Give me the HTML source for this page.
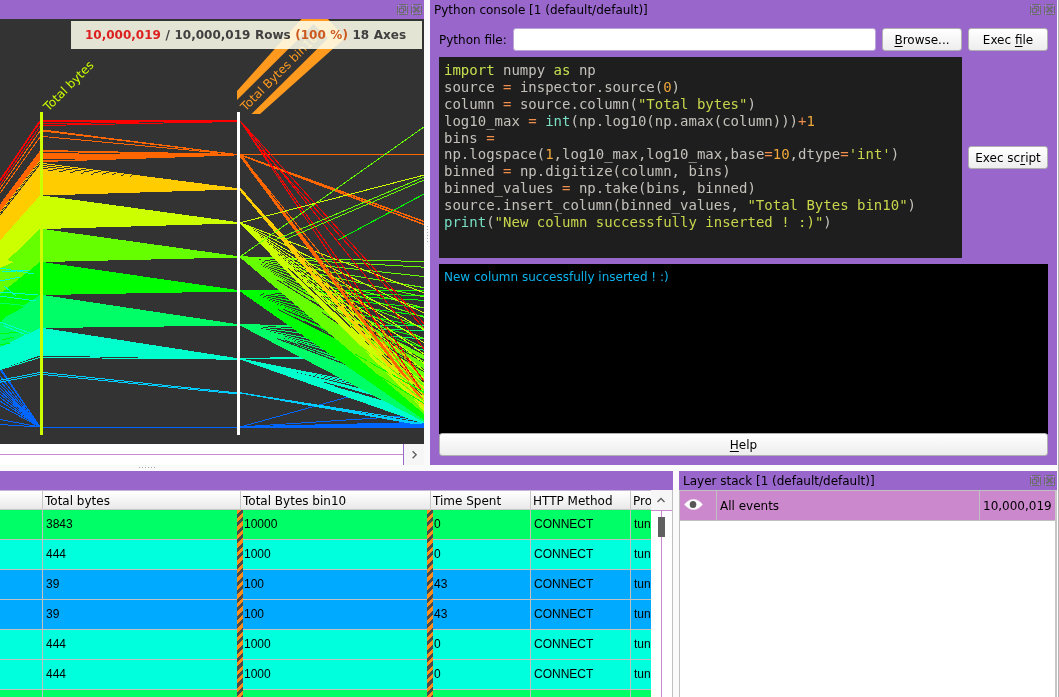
<!DOCTYPE html>
<html lang="en"><head><meta charset="utf-8"><title>Python console</title>
<style>
*{box-sizing:border-box}
html,body{margin:0;padding:0}
body{width:1059px;height:697px;overflow:hidden;background:#fafafa;position:relative;font-family:"DejaVu Sans","Liberation Sans",sans-serif;font-size:12px;color:#000}
.abs{position:absolute}
#plt,#con,#tab,#lay{will-change:transform}
.ttl{line-height:14px;white-space:nowrap}
.btn{position:absolute;border:1px solid #b0b0b0;border-radius:3px;background:linear-gradient(#ffffff,#ededed);text-align:center;white-space:nowrap}
u{text-decoration:underline;text-underline-offset:2px;text-decoration-thickness:1px}

#plt{left:0;top:0;width:424px;height:465px;background:#fff;overflow:hidden}
#plt .bar{left:0;top:0;width:424px;height:19px;background:#9966cc}
#plt svg.pc{left:0;top:19px}
#stats{left:71px;top:21px;width:351px;height:28px;background:rgba(255,255,238,0.87);font-weight:bold;font-size:12px;line-height:28px;white-space:pre;color:#404040;padding-left:14px;word-spacing:0.4px}

#con{left:430px;top:0;width:627px;height:465px;background:#9966cc}
#con .lbl{left:9px;top:33px;line-height:14px}
#con .inp{left:83px;top:28px;width:363px;height:23px;background:#fff;border:1px solid #b9a4d4;border-radius:3px}
#code{left:9px;top:57px;width:523px;height:201px;background:#1e1e1e;color:#c3c1ba;font-family:"DejaVu Sans Mono","Liberation Mono",monospace;font-size:14px;line-height:17px;padding:5px 0 0 5px;white-space:pre;overflow:hidden;margin:0}
#code .up{position:relative;top:-1px}
#code .k{color:#c5e04e}
#code .s{color:#c8d64c}
#code .o{color:#ef8d4a}
#code .n{color:#f0a83a}
#code .b{color:#78dec4}
#out{left:9px;top:264px;width:609px;height:170px;background:#000;color:#0cb4ee;padding:6px 0 0 5px;line-height:14px}

#tab{left:0;top:471px;width:673px;height:226px;background:#fff;overflow:hidden}
#tab .bar{left:0;top:0;width:673px;height:19px;background:#9966cc}
#tab .hd{left:0;top:19px;width:651px;height:20px;background:linear-gradient(#ffffff,#f4f4f4 50%,#e9e9e9);border-bottom:1px solid #c6c6c6;border-top:1px solid #c4b4d6}
#tab .h{top:21px;line-height:18px;white-space:nowrap}
#tab .hs{top:19px;width:1px;height:20px;background:#c8c8c8}
#tab .r{left:0;width:651px;height:30px;border-bottom:1px solid #c0c0c0;font-family:"Liberation Sans",sans-serif}
#tab .r span{position:absolute;top:0;line-height:28px;white-space:nowrap}
#tab .vs{top:39px;width:1px;height:187px;background:#c0c0c0}
#tab .hz{top:39px;width:6px;height:187px;background:repeating-linear-gradient(135deg,#ff8c1a 0,#ff8c1a 3px,#4a4a4a 3px,#4a4a4a 6px)}

#lay{left:679px;top:471px;width:378px;height:226px;background:#fff}
#lay .bar{left:0;top:0;width:378px;height:19px;background:#9966cc}
#lay .row{left:1px;top:19px;width:375px;height:31px;background:#cc88cc;border-top:1px solid #c0c0c0;border-bottom:1px solid #c0c0c0}
#lay .c{top:0;height:29px;line-height:30px}
</style></head>
<body>
<div id="plt" class="abs">
<div class="abs bar"></div>
<svg class="abs ticons" style="left:397px;top:4px" width="25" height="11" viewBox="0 0 25 11"><g shape-rendering="crispEdges"><g transform="translate(0,0)"><path d="M1.5 0.5H9.5M1.5 10.5H9.5M0.5 1.5V9.5M10.5 1.5V9.5" stroke="#6d6d6d" fill="none"/><rect x="0" y="0" width="1" height="1" fill="#6d6d6d" opacity="0.55"/><rect x="10" y="0" width="1" height="1" fill="#6d6d6d" opacity="0.55"/><rect x="0" y="10" width="1" height="1" fill="#6d6d6d" opacity="0.55"/><rect x="10" y="10" width="1" height="1" fill="#6d6d6d" opacity="0.55"/><rect x="1" y="1" width="1" height="1" fill="#b89fd0"/><rect x="9" y="1" width="1" height="1" fill="#b89fd0"/><rect x="1" y="9" width="1" height="1" fill="#b89fd0"/><rect x="9" y="9" width="1" height="1" fill="#b89fd0"/><path d="M2.5 4.5H6.5V8.5H2.5Z M4.5 4V2.5H8.5V6.5H7" stroke="#6d6d6d" fill="none"/></g><g transform="translate(14,0)"><path d="M1.5 0.5H9.5M1.5 10.5H9.5M0.5 1.5V9.5M10.5 1.5V9.5" stroke="#6d6d6d" fill="none"/><rect x="0" y="0" width="1" height="1" fill="#6d6d6d" opacity="0.55"/><rect x="10" y="0" width="1" height="1" fill="#6d6d6d" opacity="0.55"/><rect x="0" y="10" width="1" height="1" fill="#6d6d6d" opacity="0.55"/><rect x="10" y="10" width="1" height="1" fill="#6d6d6d" opacity="0.55"/><rect x="1" y="1" width="1" height="1" fill="#b89fd0"/><rect x="9" y="1" width="1" height="1" fill="#b89fd0"/><rect x="1" y="9" width="1" height="1" fill="#b89fd0"/><rect x="9" y="9" width="1" height="1" fill="#b89fd0"/><path d="M2.6 2.6L8.4 8.4M8.4 2.6L2.6 8.4" stroke="#6d6d6d" stroke-width="2" fill="none" shape-rendering="geometricPrecision"/></g></g></svg>
<svg class="abs pc" width="424" height="425" viewBox="0 19 424 425" shape-rendering="crispEdges">
<rect x="0" y="19" width="424" height="425" fill="#333333"/>
<polygon points="43.0,328.0 237.0,358.1 237.0,359.6 43.0,355.5" fill="#00ffcc"/>
<polygon points="43.0,295.0 237.0,324.1 237.0,325.6 43.0,328.0" fill="#00ff66"/>
<polygon points="43.0,262.0 237.0,290.0 237.0,291.5 43.0,295.0" fill="#00ff00"/>
<polygon points="43.0,229.0 237.0,256.0 237.0,257.5 43.0,262.0" fill="#66ff00"/>
<polygon points="43.0,195.5 237.0,222.0 237.0,223.5 43.0,229.0" fill="#ccff00"/>
<polygon points="43.0,170.0 237.0,188.0 237.0,189.5 43.0,195.5" fill="#ffcc00"/>
<line x1="43.0" y1="357.5" x2="237.0" y2="359.2" stroke="#00ffcc" stroke-width="1"/>
<line x1="43.0" y1="372.5" x2="237.0" y2="392.9" stroke="#00ccff" stroke-width="1"/>
<line x1="43.0" y1="374.5" x2="237.0" y2="393.9" stroke="#00ccff" stroke-width="1"/>
<line x1="43.0" y1="427.3" x2="237.0" y2="427.3" stroke="#0066ff" stroke-width="1.6"/>
<polygon points="43.0,150.0 237.0,153.9 237.0,155.4 43.0,162.0" fill="#ff6600"/>
<line x1="43.0" y1="130.0" x2="237.0" y2="154.5" stroke="#ff6600" stroke-width="1"/>
<line x1="43.0" y1="131.0" x2="237.0" y2="154.5" stroke="#ff6600" stroke-width="1"/>
<line x1="43.0" y1="136.5" x2="237.0" y2="154.5" stroke="#ff6600" stroke-width="1"/>
<line x1="43.0" y1="151.0" x2="237.0" y2="154.5" stroke="#ff6600" stroke-width="1"/>
<line x1="43.0" y1="152.5" x2="120.0" y2="153.6" stroke="#333" stroke-width="1"/>
<line x1="43.0" y1="159.5" x2="75.0" y2="159.9" stroke="#333" stroke-width="1"/>
<line x1="43.0" y1="163.5" x2="237.0" y2="188.6" stroke="#ffcc00" stroke-width="1"/>
<line x1="43.0" y1="165.5" x2="237.0" y2="188.6" stroke="#ffcc00" stroke-width="1"/>
<line x1="43.0" y1="167.5" x2="237.0" y2="188.6" stroke="#ffcc00" stroke-width="1"/>
<line x1="43.0" y1="169.0" x2="237.0" y2="188.6" stroke="#ffcc00" stroke-width="1"/>
<line x1="43.0" y1="121.0" x2="237.0" y2="121.0" stroke="#ff0000" stroke-width="2"/>
<line x1="43.0" y1="125.5" x2="237.0" y2="121.5" stroke="#ff0000" stroke-width="1"/>
<line x1="43.0" y1="124.0" x2="140.0" y2="122.0" stroke="#ff0000" stroke-width="1"/>
<line x1="0.0" y1="367.5" x2="40.0" y2="427.0" stroke="#0066ff" stroke-width="1"/>
<line x1="0.0" y1="369.5" x2="40.0" y2="427.0" stroke="#0066ff" stroke-width="1"/>
<line x1="0.0" y1="376.0" x2="40.0" y2="427.0" stroke="#0066ff" stroke-width="1"/>
<line x1="0.0" y1="381.0" x2="40.0" y2="427.0" stroke="#0066ff" stroke-width="1"/>
<line x1="0.0" y1="385.0" x2="40.0" y2="427.0" stroke="#0066ff" stroke-width="1"/>
<line x1="0.0" y1="388.0" x2="40.0" y2="427.0" stroke="#0066ff" stroke-width="1"/>
<line x1="0.0" y1="391.0" x2="40.0" y2="427.0" stroke="#0066ff" stroke-width="1"/>
<line x1="0.0" y1="394.0" x2="40.0" y2="427.0" stroke="#0066ff" stroke-width="1"/>
<line x1="0.0" y1="397.5" x2="40.0" y2="427.0" stroke="#0066ff" stroke-width="1"/>
<line x1="0.0" y1="401.0" x2="40.0" y2="427.0" stroke="#0066ff" stroke-width="1"/>
<line x1="0.0" y1="405.5" x2="40.0" y2="427.0" stroke="#0066ff" stroke-width="1"/>
<line x1="0.0" y1="419.5" x2="40.0" y2="427.0" stroke="#0066ff" stroke-width="1"/>
<line x1="0.0" y1="424.5" x2="40.0" y2="427.0" stroke="#0066ff" stroke-width="1"/>
<line x1="0.0" y1="380.2" x2="40.0" y2="372.5" stroke="#00ccff" stroke-width="1"/>
<line x1="0.0" y1="382.2" x2="40.0" y2="374.5" stroke="#00ccff" stroke-width="1"/>
<polygon points="0.0,347.2 40.0,328.0 40.0,355.5 0.0,369.4" fill="#00ffcc"/>
<line x1="0.0" y1="369.6" x2="40.0" y2="357.5" stroke="#00ffcc" stroke-width="1"/>
<polygon points="0.0,320.6 40.0,295.0 40.0,328.0 0.0,347.2" fill="#00ff66"/>
<polygon points="0.0,294.0 40.0,262.0 40.0,295.0 0.0,320.6" fill="#00ff00"/>
<polygon points="0.0,267.4 40.0,229.0 40.0,262.0 0.0,294.0" fill="#66ff00"/>
<polygon points="0.0,240.5 40.0,195.5 40.0,229.0 0.0,267.4" fill="#ccff00"/>
<polygon points="0.0,215.1 40.0,164.0 40.0,195.5 0.0,240.5" fill="#ffcc00"/>
<polygon points="0.0,204.2 40.0,150.5 40.0,160.0 0.0,211.8" fill="#ff6600"/>
<polygon points="0.0,319.9 40.0,262.0 40.0,276.0 0.0,323.4" fill="#00ff00"/>
<polygon points="0.0,299.0 24.0,307.0 0.0,320.0" fill="#00ff00"/>
<polygon points="0.0,258.0 14.0,262.0 0.0,268.0" fill="#ccff00"/>
<line x1="0.0" y1="268.0" x2="34.0" y2="274.0" stroke="#00ffcc" stroke-width="1"/>
<line x1="2.0" y1="272.0" x2="30.0" y2="270.0" stroke="#00ffcc" stroke-width="1"/>
<line x1="0.0" y1="281.0" x2="20.0" y2="277.0" stroke="#00ffcc" stroke-width="1"/>
<line x1="4.0" y1="286.0" x2="16.0" y2="296.0" stroke="#00ffcc" stroke-width="1"/>
<line x1="0.0" y1="292.0" x2="38.0" y2="295.0" stroke="#00ffcc" stroke-width="1"/>
<line x1="0.0" y1="296.0" x2="36.0" y2="301.0" stroke="#00ffcc" stroke-width="1"/>
<line x1="0.0" y1="303.0" x2="30.0" y2="306.0" stroke="#00ff66" stroke-width="1"/>
<line x1="0.0" y1="322.0" x2="30.0" y2="333.0" stroke="#00ffcc" stroke-width="1"/>
<line x1="4.0" y1="326.0" x2="34.0" y2="338.0" stroke="#00ffcc" stroke-width="1"/>
<line x1="0.0" y1="334.0" x2="18.0" y2="332.0" stroke="#00ff00" stroke-width="1"/>
<line x1="2.0" y1="340.0" x2="14.0" y2="337.0" stroke="#00ff00" stroke-width="1"/>
<line x1="0.0" y1="345.0" x2="10.0" y2="343.0" stroke="#00ff00" stroke-width="1"/>
<line x1="0.0" y1="212.7" x2="40.0" y2="161.0" stroke="#ffcc00" stroke-width="1"/>
<line x1="0.0" y1="213.5" x2="40.0" y2="162.0" stroke="#333" stroke-width="1"/>
<line x1="0.0" y1="214.3" x2="40.0" y2="163.0" stroke="#ffcc00" stroke-width="1"/>
<line x1="0.0" y1="215.1" x2="40.0" y2="164.0" stroke="#333" stroke-width="1"/>
<line x1="0.0" y1="188.5" x2="40.0" y2="131.0" stroke="#ff6600" stroke-width="1"/>
<line x1="0.0" y1="193.3" x2="40.0" y2="137.0" stroke="#ff6600" stroke-width="1"/>
<line x1="0.0" y1="180.7" x2="40.0" y2="121.3" stroke="#ff0000" stroke-width="1.7"/>
<line x1="0.0" y1="184.8" x2="40.0" y2="126.4" stroke="#ff0000" stroke-width="1"/>
<polygon points="240.0,426.3 424.0,421.9 424.0,428.1 240.0,427.6" fill="#0066ff"/>
<line x1="240.0" y1="427.0" x2="424.0" y2="375.9" stroke="#0066ff" stroke-width="1"/>
<line x1="240.0" y1="427.0" x2="424.0" y2="414.9" stroke="#0066ff" stroke-width="1"/>
<polygon points="240.0,392.2 424.0,423.2 424.0,426.0 240.0,393.5" fill="#00ccff"/>
<line x1="240.0" y1="392.9" x2="424.0" y2="421.8" stroke="#00ccff" stroke-width="1"/>
<polygon points="240.0,358.2 424.0,404.5 424.0,424.0 240.0,359.5" fill="#00ffcc"/>
<line x1="324.5" y1="382.4" x2="424.0" y2="410.3" stroke="#333" stroke-width="1"/>
<line x1="336.5" y1="386.6" x2="424.0" y2="411.9" stroke="#333" stroke-width="1"/>
<line x1="335.3" y1="386.0" x2="424.0" y2="411.4" stroke="#333" stroke-width="1"/>
<line x1="240.0" y1="358.9" x2="424.0" y2="353.4" stroke="#00ffcc" stroke-width="1"/>
<line x1="240.0" y1="358.9" x2="424.0" y2="357.1" stroke="#00ffcc" stroke-width="1"/>
<line x1="240.0" y1="358.9" x2="424.0" y2="395.2" stroke="#00ffcc" stroke-width="1"/>
<line x1="240.0" y1="358.9" x2="424.0" y2="398.0" stroke="#00ffcc" stroke-width="1"/>
<line x1="240.0" y1="358.9" x2="424.0" y2="400.8" stroke="#00ffcc" stroke-width="1"/>
<polygon points="240.0,324.2 424.0,383.5 424.0,422.0 240.0,325.5" fill="#00ff66"/>
<line x1="297.9" y1="343.3" x2="424.0" y2="383.8" stroke="#333" stroke-width="1"/>
<line x1="308.9" y1="350.7" x2="424.0" y2="394.0" stroke="#333" stroke-width="1"/>
<line x1="276.8" y1="338.5" x2="424.0" y2="393.6" stroke="#333" stroke-width="1"/>
<line x1="284.8" y1="340.3" x2="424.0" y2="388.8" stroke="#333" stroke-width="1"/>
<line x1="240.0" y1="324.9" x2="424.0" y2="325.9" stroke="#00ff66" stroke-width="1"/>
<line x1="240.0" y1="324.9" x2="424.0" y2="330.6" stroke="#00ff66" stroke-width="1"/>
<line x1="240.0" y1="324.9" x2="424.0" y2="338.9" stroke="#00ff66" stroke-width="1"/>
<line x1="240.0" y1="324.9" x2="424.0" y2="350.1" stroke="#00ff66" stroke-width="1"/>
<line x1="240.0" y1="324.9" x2="424.0" y2="361.2" stroke="#00ff66" stroke-width="1"/>
<line x1="240.0" y1="324.9" x2="424.0" y2="368.7" stroke="#00ff66" stroke-width="1"/>
<line x1="240.0" y1="324.9" x2="424.0" y2="374.2" stroke="#00ff66" stroke-width="1"/>
<line x1="240.0" y1="324.9" x2="424.0" y2="378.9" stroke="#00ff66" stroke-width="1"/>
<polygon points="240.0,290.1 424.0,370.0 424.0,420.1 240.0,291.4" fill="#00ff00"/>
<line x1="304.4" y1="321.3" x2="424.0" y2="378.1" stroke="#333" stroke-width="1"/>
<line x1="283.0" y1="309.2" x2="424.0" y2="370.2" stroke="#333" stroke-width="1"/>
<line x1="325.0" y1="329.2" x2="424.0" y2="374.1" stroke="#333" stroke-width="1"/>
<line x1="279.6" y1="310.2" x2="424.0" y2="381.4" stroke="#333" stroke-width="1"/>
<line x1="278.3" y1="309.6" x2="424.0" y2="381.8" stroke="#333" stroke-width="1"/>
<line x1="240.0" y1="290.8" x2="424.0" y2="291.0" stroke="#00ff00" stroke-width="1"/>
<line x1="240.0" y1="290.8" x2="424.0" y2="295.6" stroke="#00ff00" stroke-width="1"/>
<line x1="240.0" y1="290.8" x2="424.0" y2="300.3" stroke="#00ff00" stroke-width="1"/>
<line x1="240.0" y1="290.8" x2="424.0" y2="307.7" stroke="#00ff00" stroke-width="1"/>
<line x1="240.0" y1="290.8" x2="424.0" y2="316.1" stroke="#00ff00" stroke-width="1"/>
<line x1="240.0" y1="290.8" x2="424.0" y2="327.2" stroke="#00ff00" stroke-width="1"/>
<line x1="240.0" y1="290.8" x2="424.0" y2="338.4" stroke="#00ff00" stroke-width="1"/>
<line x1="240.0" y1="290.8" x2="424.0" y2="347.7" stroke="#00ff00" stroke-width="1"/>
<line x1="240.0" y1="290.8" x2="424.0" y2="355.1" stroke="#00ff00" stroke-width="1"/>
<line x1="240.0" y1="290.8" x2="424.0" y2="360.7" stroke="#00ff00" stroke-width="1"/>
<line x1="240.0" y1="290.8" x2="424.0" y2="365.3" stroke="#00ff00" stroke-width="1"/>
<polygon points="240.0,256.1 424.0,354.5 424.0,414.0 240.0,257.4" fill="#66ff00"/>
<line x1="277.6" y1="280.2" x2="424.0" y2="371.8" stroke="#333" stroke-width="1"/>
<line x1="322.3" y1="300.4" x2="424.0" y2="354.6" stroke="#333" stroke-width="1"/>
<line x1="282.9" y1="280.8" x2="424.0" y2="360.4" stroke="#333" stroke-width="1"/>
<line x1="322.3" y1="312.7" x2="424.0" y2="381.9" stroke="#333" stroke-width="1"/>
<line x1="327.7" y1="307.1" x2="424.0" y2="362.6" stroke="#333" stroke-width="1"/>
<line x1="310.7" y1="300.0" x2="424.0" y2="369.6" stroke="#333" stroke-width="1"/>
<line x1="326.5" y1="305.3" x2="424.0" y2="360.3" stroke="#333" stroke-width="1"/>
<line x1="240.0" y1="256.8" x2="424.0" y2="261.6" stroke="#66ff00" stroke-width="1"/>
<line x1="240.0" y1="256.8" x2="424.0" y2="267.2" stroke="#66ff00" stroke-width="1"/>
<line x1="240.0" y1="256.8" x2="424.0" y2="276.5" stroke="#66ff00" stroke-width="1"/>
<line x1="240.0" y1="256.8" x2="424.0" y2="287.6" stroke="#66ff00" stroke-width="1"/>
<line x1="240.0" y1="256.8" x2="424.0" y2="296.9" stroke="#66ff00" stroke-width="1"/>
<line x1="240.0" y1="256.8" x2="424.0" y2="308.1" stroke="#66ff00" stroke-width="1"/>
<line x1="240.0" y1="256.8" x2="424.0" y2="317.4" stroke="#66ff00" stroke-width="1"/>
<line x1="240.0" y1="256.8" x2="424.0" y2="328.5" stroke="#66ff00" stroke-width="1"/>
<line x1="240.0" y1="256.8" x2="424.0" y2="338.8" stroke="#66ff00" stroke-width="1"/>
<line x1="240.0" y1="256.8" x2="424.0" y2="348.0" stroke="#66ff00" stroke-width="1"/>
<polygon points="240.0,222.1 424.0,391.2 424.0,411.1 240.0,223.4" fill="#ccff00"/>
<line x1="328.0" y1="305.1" x2="424.0" y2="395.0" stroke="#333" stroke-width="1"/>
<line x1="287.9" y1="267.8" x2="424.0" y2="396.2" stroke="#333" stroke-width="1"/>
<line x1="240.0" y1="222.8" x2="424.0" y2="292.7" stroke="#ccff00" stroke-width="1"/>
<line x1="240.0" y1="222.8" x2="424.0" y2="313.1" stroke="#ccff00" stroke-width="1"/>
<line x1="240.0" y1="222.8" x2="424.0" y2="329.8" stroke="#ccff00" stroke-width="1"/>
<line x1="240.0" y1="222.8" x2="424.0" y2="342.8" stroke="#ccff00" stroke-width="1"/>
<line x1="240.0" y1="222.8" x2="424.0" y2="354.0" stroke="#ccff00" stroke-width="1"/>
<line x1="240.0" y1="222.8" x2="424.0" y2="363.3" stroke="#ccff00" stroke-width="1"/>
<line x1="240.0" y1="222.8" x2="424.0" y2="370.7" stroke="#ccff00" stroke-width="1"/>
<line x1="240.0" y1="222.8" x2="424.0" y2="378.2" stroke="#ccff00" stroke-width="1"/>
<line x1="240.0" y1="222.8" x2="424.0" y2="383.7" stroke="#ccff00" stroke-width="1"/>
<line x1="240.0" y1="222.8" x2="424.0" y2="387.5" stroke="#ccff00" stroke-width="1"/>
<line x1="240.0" y1="188.8" x2="424.0" y2="406.9" stroke="#ffcc00" stroke-width="2.6"/>
<line x1="240.0" y1="188.8" x2="424.0" y2="388.8" stroke="#ffcc00" stroke-width="1"/>
<line x1="240.0" y1="188.8" x2="424.0" y2="395.3" stroke="#ffcc00" stroke-width="1"/>
<line x1="240.0" y1="188.8" x2="424.0" y2="400.8" stroke="#ffcc00" stroke-width="1"/>
<line x1="240.0" y1="154.7" x2="424.0" y2="402.6" stroke="#ff6600" stroke-width="2.8"/>
<line x1="240.0" y1="154.7" x2="424.0" y2="380.8" stroke="#ff6600" stroke-width="1"/>
<line x1="240.0" y1="154.7" x2="424.0" y2="394.7" stroke="#ff6600" stroke-width="1"/>
<line x1="240.0" y1="154.7" x2="424.0" y2="154.6" stroke="#ff6600" stroke-width="1"/>
<line x1="240.0" y1="154.7" x2="424.0" y2="221.5" stroke="#ff6600" stroke-width="1.5"/>
<line x1="240.0" y1="154.7" x2="424.0" y2="224.5" stroke="#ff6600" stroke-width="1.5"/>
<line x1="240.0" y1="120.7" x2="424.0" y2="323.6" stroke="#ff0000" stroke-width="1"/>
<line x1="240.0" y1="120.7" x2="424.0" y2="348.6" stroke="#ff0000" stroke-width="1"/>
<line x1="240.0" y1="120.7" x2="424.0" y2="381.2" stroke="#ff0000" stroke-width="1"/>
<line x1="240.0" y1="120.7" x2="424.0" y2="394.2" stroke="#ff0000" stroke-width="1"/>
<line x1="262.0" y1="150.0" x2="424.0" y2="328.2" stroke="#ff0000" stroke-width="1"/>
<line x1="350.0" y1="326.2" x2="424.0" y2="395.8" stroke="#ccff00" stroke-width="1"/>
<line x1="352.0" y1="340.0" x2="424.0" y2="393.6" stroke="#66ff00" stroke-width="1"/>
<line x1="357.0" y1="336.9" x2="424.0" y2="402.3" stroke="#ccff00" stroke-width="1"/>
<line x1="360.0" y1="350.8" x2="424.0" y2="401.0" stroke="#66ff00" stroke-width="1"/>
<line x1="355.0" y1="354.2" x2="424.0" y2="392.3" stroke="#00ff00" stroke-width="1"/>
<line x1="367.0" y1="360.8" x2="424.0" y2="407.5" stroke="#66ff00" stroke-width="1"/>
<line x1="362.0" y1="345.2" x2="424.0" y2="407.4" stroke="#ccff00" stroke-width="1"/>
<line x1="367.0" y1="368.5" x2="424.0" y2="403.4" stroke="#00ff00" stroke-width="1"/>
<line x1="240.0" y1="256.8" x2="424.0" y2="126.9" stroke="#66ff00" stroke-width="1"/>
<line x1="240.0" y1="222.8" x2="424.0" y2="175.1" stroke="#ccff00" stroke-width="1"/>
<line x1="275.0" y1="240.0" x2="424.0" y2="177.0" stroke="#66ff00" stroke-width="1"/>
<line x1="284.0" y1="240.0" x2="424.0" y2="180.0" stroke="#66ff00" stroke-width="1"/>
<line x1="338.0" y1="240.0" x2="424.0" y2="194.0" stroke="#00ff00" stroke-width="1"/>
<polygon points="330.0,427.6 424.0,423.4 424.0,428.2 330.0,428.2" fill="#0066ff"/>
<g shape-rendering="geometricPrecision">
<polygon points="237.0,91.0 301.5,19.0 328.0,19.0 345.0,38.0 260.0,114.0 237.0,114.0" fill="#ff9a1e"/>
<polygon points="237.0,100.0 313.6,24.0 328.0,38.3 251.5,114.0 237.0,114.0" fill="#333333"/>
</g>
<rect x="40" y="112" width="3" height="323" fill="#ccff00"/>
<rect x="237" y="112" width="3" height="323" fill="#ffffff"/>
<text x="0" y="0" transform="translate(48.5,111.8) rotate(-45)" fill="#ccff00" font-size="12" font-family="DejaVu Sans, Liberation Sans, sans-serif" shape-rendering="geometricPrecision">Total bytes</text>
<text x="0" y="0" transform="translate(245.5,111.8) rotate(-45)" fill="#ff9a1e" font-size="12" font-family="DejaVu Sans, Liberation Sans, sans-serif">Total Bytes bin10</text>
</svg>
<div id="stats" class="abs"><span style="color:#dc2020">10,000,019</span> / 10,000,019 Rows <span style="color:#cc5a1e">(100 %)</span> 18 Axes</div>
<div class="abs" style="left:0;top:444px;width:424px;height:21px;background:#fff"></div>
<div class="abs" style="left:0;top:454px;width:404px;height:1px;background:#c98ad0"></div>
<div class="abs" style="left:403px;top:444px;width:1px;height:21px;background:#9966cc"></div>
<div class="abs" style="left:404px;top:444px;width:20px;height:21px;background:#f6f6f6"></div>
<svg class="abs" style="left:410px;top:448px" width="9" height="13" viewBox="0 0 9 13"><path d="M2.6 3.2 L6.2 6.7 L2.6 10.2" fill="none" stroke="#5c5c5c" stroke-width="1.3"/></svg>
</div>
<div id="con" class="abs">
<div class="abs ttl" style="left:4px;top:3px">Python console [1 (default/default)]</div>
<svg class="abs ticons" style="left:600px;top:4px" width="25" height="11" viewBox="0 0 25 11"><g shape-rendering="crispEdges"><g transform="translate(0,0)"><path d="M1.5 0.5H9.5M1.5 10.5H9.5M0.5 1.5V9.5M10.5 1.5V9.5" stroke="#6d6d6d" fill="none"/><rect x="0" y="0" width="1" height="1" fill="#6d6d6d" opacity="0.55"/><rect x="10" y="0" width="1" height="1" fill="#6d6d6d" opacity="0.55"/><rect x="0" y="10" width="1" height="1" fill="#6d6d6d" opacity="0.55"/><rect x="10" y="10" width="1" height="1" fill="#6d6d6d" opacity="0.55"/><rect x="1" y="1" width="1" height="1" fill="#b89fd0"/><rect x="9" y="1" width="1" height="1" fill="#b89fd0"/><rect x="1" y="9" width="1" height="1" fill="#b89fd0"/><rect x="9" y="9" width="1" height="1" fill="#b89fd0"/><path d="M2.5 4.5H6.5V8.5H2.5Z M4.5 4V2.5H8.5V6.5H7" stroke="#6d6d6d" fill="none"/></g><g transform="translate(14,0)"><path d="M1.5 0.5H9.5M1.5 10.5H9.5M0.5 1.5V9.5M10.5 1.5V9.5" stroke="#6d6d6d" fill="none"/><rect x="0" y="0" width="1" height="1" fill="#6d6d6d" opacity="0.55"/><rect x="10" y="0" width="1" height="1" fill="#6d6d6d" opacity="0.55"/><rect x="0" y="10" width="1" height="1" fill="#6d6d6d" opacity="0.55"/><rect x="10" y="10" width="1" height="1" fill="#6d6d6d" opacity="0.55"/><rect x="1" y="1" width="1" height="1" fill="#b89fd0"/><rect x="9" y="1" width="1" height="1" fill="#b89fd0"/><rect x="1" y="9" width="1" height="1" fill="#b89fd0"/><rect x="9" y="9" width="1" height="1" fill="#b89fd0"/><path d="M2.6 2.6L8.4 8.4M8.4 2.6L2.6 8.4" stroke="#6d6d6d" stroke-width="2" fill="none" shape-rendering="geometricPrecision"/></g></g></svg>
<div class="abs lbl">Python file:</div>
<div class="abs inp"></div>
<div class="btn" style="left:452px;top:28px;width:80px;height:23px;line-height:23px"><u>B</u>rowse...</div>
<div class="btn" style="left:538px;top:28px;width:80px;height:23px;line-height:23px">Exec <u>f</u>ile</div>
<pre id="code" class="abs"><span class="k">import</span> numpy <span class="k">as</span> np
source <span class="o">=</span> inspector.source(<span class="n">0</span>)
column <span class="o">=</span> source.column(<span class="s">"Total bytes"</span>)
log10_max <span class="o">=</span> <span class="b">int</span>(np.log10(np.amax(column)))<span class="o">+</span><span class="n">1</span>
bins <span class="o">=</span>
<span class="up">np.logspace(<span class="n">1</span>,log10_max,log10_max,base<span class="o">=</span><span class="n">10</span>,dtype<span class="o">=</span><span class="s">'int'</span>)
binned <span class="o">=</span> np.digitize(column, bins)
binned_values <span class="o">=</span> np.take(bins, binned)
source.insert_column(binned_values, <span class="s">"Total Bytes bin10"</span>)
<span class="b">print</span>(<span class="s">"New column successfully inserted ! :)"</span>)</span></pre>
<div class="btn" style="left:538px;top:146px;width:80px;height:23px;line-height:23px">Exec sc<u>r</u>ipt</div>
<div id="out" class="abs">New column successfully inserted ! :)</div>
<div class="btn" style="left:9px;top:433px;width:609px;height:23px;line-height:23px"><u>H</u>elp</div>
</div>
<div id="tab" class="abs">
<div class="abs bar"></div>
<div class="abs hd"></div>
<div class="abs h" style="left:45px">Total bytes</div>
<div class="abs h" style="left:243px">Total Bytes bin10</div>
<div class="abs h" style="left:433px">Time Spent</div>
<div class="abs h" style="left:533px">HTTP Method</div>
<div class="abs h" style="left:633px">Pro</div>
<div class="abs hs" style="left:42px"></div>
<div class="abs hs" style="left:240px"></div>
<div class="abs hs" style="left:430px"></div>
<div class="abs hs" style="left:530px"></div>
<div class="abs hs" style="left:630px"></div>
<div class="abs r" style="top:39px;background:#00ff66"><span style="left:46px">3843</span><span style="left:244px">10000</span><span style="left:434px">0</span><span style="left:534px">CONNECT</span><span style="left:634px;width:17px;overflow:hidden">tun</span></div>
<div class="abs r" style="top:69px;background:#00ffdd"><span style="left:46px">444</span><span style="left:244px">1000</span><span style="left:434px">0</span><span style="left:534px">CONNECT</span><span style="left:634px;width:17px;overflow:hidden">tun</span></div>
<div class="abs r" style="top:99px;background:#00aaff"><span style="left:46px">39</span><span style="left:244px">100</span><span style="left:434px">43</span><span style="left:534px">CONNECT</span><span style="left:634px;width:17px;overflow:hidden">tun</span></div>
<div class="abs r" style="top:129px;background:#00aaff"><span style="left:46px">39</span><span style="left:244px">100</span><span style="left:434px">43</span><span style="left:534px">CONNECT</span><span style="left:634px;width:17px;overflow:hidden">tun</span></div>
<div class="abs r" style="top:159px;background:#00ffdd"><span style="left:46px">444</span><span style="left:244px">1000</span><span style="left:434px">0</span><span style="left:534px">CONNECT</span><span style="left:634px;width:17px;overflow:hidden">tun</span></div>
<div class="abs r" style="top:189px;background:#00ffdd"><span style="left:46px">444</span><span style="left:244px">1000</span><span style="left:434px">0</span><span style="left:534px">CONNECT</span><span style="left:634px;width:17px;overflow:hidden">tun</span></div>
<div class="abs r" style="top:219px;background:#00ff66"><span style="left:46px">3843</span><span style="left:244px">10000</span><span style="left:434px">0</span><span style="left:534px">CONNECT</span><span style="left:634px;width:17px;overflow:hidden">tun</span></div>
<div class="abs vs" style="left:42px"></div>
<div class="abs vs" style="left:240px"></div>
<div class="abs vs" style="left:430px"></div>
<div class="abs vs" style="left:530px"></div>
<div class="abs vs" style="left:630px"></div>
<div class="abs hz" style="left:237px"></div>
<div class="abs hz" style="left:427px"></div>
<div class="abs" style="left:651px;top:19px;width:21px;height:207px;background:#fff"></div>
<div class="abs" style="left:651px;top:19px;width:21px;height:20px;background:#f6f6f6"></div>
<svg class="abs" style="left:655px;top:25px" width="12" height="8" viewBox="0 0 12 8"><path d="M2.5 6 L6 2.5 L9.5 6" fill="none" stroke="#5c5c5c" stroke-width="1.3"/></svg>
<div class="abs" style="left:651px;top:39px;width:21px;height:1px;background:#c98ad0"></div>
<div class="abs" style="left:661px;top:39px;width:1px;height:187px;background:#c98ad0"></div>
<div class="abs" style="left:658px;top:46px;width:7px;height:20px;background:#606060"></div>
<div class="abs" style="left:672px;top:19px;width:1px;height:207px;background:#c0c0c0"></div>
</div>
<div id="lay" class="abs">
<div class="abs bar"></div>
<div class="abs ttl" style="left:4px;top:3px">Layer stack [1 (default/default)]</div>
<svg class="abs ticons" style="left:351px;top:4px" width="25" height="11" viewBox="0 0 25 11"><g shape-rendering="crispEdges"><g transform="translate(0,0)"><path d="M1.5 0.5H9.5M1.5 10.5H9.5M0.5 1.5V9.5M10.5 1.5V9.5" stroke="#6d6d6d" fill="none"/><rect x="0" y="0" width="1" height="1" fill="#6d6d6d" opacity="0.55"/><rect x="10" y="0" width="1" height="1" fill="#6d6d6d" opacity="0.55"/><rect x="0" y="10" width="1" height="1" fill="#6d6d6d" opacity="0.55"/><rect x="10" y="10" width="1" height="1" fill="#6d6d6d" opacity="0.55"/><rect x="1" y="1" width="1" height="1" fill="#b89fd0"/><rect x="9" y="1" width="1" height="1" fill="#b89fd0"/><rect x="1" y="9" width="1" height="1" fill="#b89fd0"/><rect x="9" y="9" width="1" height="1" fill="#b89fd0"/><path d="M2.5 4.5H6.5V8.5H2.5Z M4.5 4V2.5H8.5V6.5H7" stroke="#6d6d6d" fill="none"/></g><g transform="translate(14,0)"><path d="M1.5 0.5H9.5M1.5 10.5H9.5M0.5 1.5V9.5M10.5 1.5V9.5" stroke="#6d6d6d" fill="none"/><rect x="0" y="0" width="1" height="1" fill="#6d6d6d" opacity="0.55"/><rect x="10" y="0" width="1" height="1" fill="#6d6d6d" opacity="0.55"/><rect x="0" y="10" width="1" height="1" fill="#6d6d6d" opacity="0.55"/><rect x="10" y="10" width="1" height="1" fill="#6d6d6d" opacity="0.55"/><rect x="1" y="1" width="1" height="1" fill="#b89fd0"/><rect x="9" y="1" width="1" height="1" fill="#b89fd0"/><rect x="1" y="9" width="1" height="1" fill="#b89fd0"/><rect x="9" y="9" width="1" height="1" fill="#b89fd0"/><path d="M2.6 2.6L8.4 8.4M8.4 2.6L2.6 8.4" stroke="#6d6d6d" stroke-width="2" fill="none" shape-rendering="geometricPrecision"/></g></g></svg>
<div class="abs row">
<svg class="abs" style="left:4px;top:8px" width="19" height="11" viewBox="0 0 20 11" preserveAspectRatio="none"><path d="M0.3 5.5 C3.5 1.8 6.8 0.3 10 0.3 C13.2 0.3 16.5 1.8 19.7 5.5 C16.5 9.2 13.2 10.7 10 10.7 C6.8 10.7 3.5 9.2 0.3 5.5 Z" fill="#fff" stroke="#e6cfe6" stroke-width="0.6"/><circle cx="9.5" cy="5.5" r="3.5" fill="#585858"/></svg>
<div class="abs" style="left:36px;top:0;width:1px;height:29px;background:#c0c0c0"></div>
<div class="abs c" style="left:40px">All events</div>
<div class="abs" style="left:299px;top:0;width:1px;height:29px;background:#c0c0c0"></div>
<div class="abs c" style="left:303px">10,000,019</div>
</div>
<div class="abs" style="left:0;top:19px;width:1px;height:207px;background:#c0c0c0"></div>
<div class="abs" style="left:376px;top:19px;width:2px;height:207px;background:#c6c6c6"></div>
</div>
<div class="abs" style="left:139px;top:467px;width:16px;height:1px;background:repeating-linear-gradient(90deg,#a8a8a8 0,#a8a8a8 1px,transparent 1px,transparent 3px)"></div>
<div class="abs" style="left:1057px;top:0;width:2px;height:697px;background:linear-gradient(90deg,#fff 0,#fff 1px,#b4b4b4 1px,#b4b4b4 2px)"></div>
<div class="abs" style="left:427px;top:226px;width:1px;height:16px;background:repeating-linear-gradient(#a8a8a8 0,#a8a8a8 1px,transparent 1px,transparent 3px)"></div>
</body></html>
